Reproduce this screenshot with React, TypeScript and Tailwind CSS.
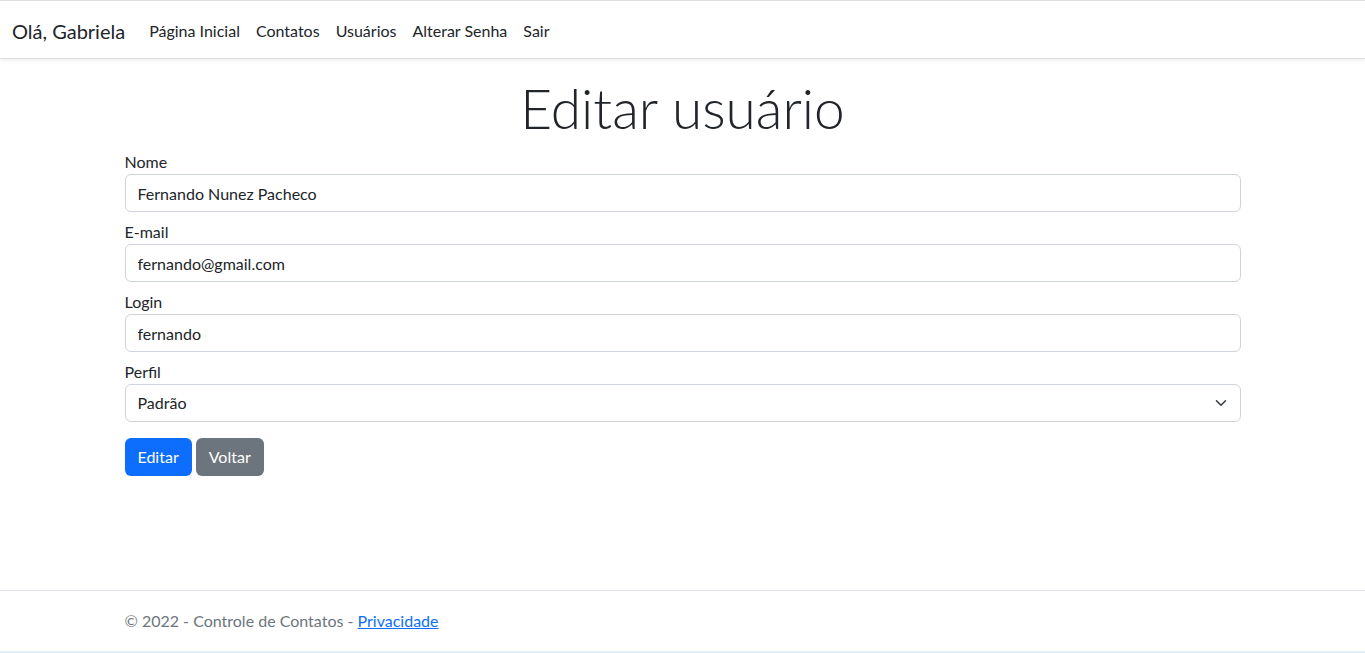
import { useState } from "react";

const font = { fontFamily: '"Segoe UI", Lato, "Noto Sans", "Liberation Sans", sans-serif' };

const navLinks = ["Página Inicial", "Contatos", "Usuários", "Alterar Senha", "Sair"];

function Field({
  label,
  value,
  onChange,
}: {
  label: string;
  value: string;
  onChange: (v: string) => void;
}) {
  return (
    <div className="mb-2">
      <label className="block text-[16px] leading-6 text-[#212529]">{label}</label>
      <input
        className="block w-full h-[38px] px-3 py-[6px] text-[16px] leading-6 text-[#212529] bg-white border border-[#ced4da] rounded-[6px] outline-none"
        value={value}
        onChange={(e) => onChange(e.target.value)}
      />
    </div>
  );
}

export default function App() {
  const [nome, setNome] = useState("Fernando Nunez Pacheco");
  const [email, setEmail] = useState("fernando@gmail.com");
  const [login, setLogin] = useState("fernando");
  const [perfil, setPerfil] = useState("Padrão");

  return (
    <div className="flex flex-col h-[653px] bg-white text-[#212529]" style={font}>
      <nav className="h-[59px] border-t border-b border-[#dedede] bg-white shadow-[0_2px_4px_rgba(0,0,0,0.06)] flex items-center px-3 pt-[2px]">
        <span className="text-[20px] leading-[30px] mr-4 text-[#212529]">Olá, Gabriela</span>
        <ul className="flex">
          {navLinks.map((l) => (
            <li key={l}>
              <a href="#" className="block px-2 py-2 text-[16px] leading-6 text-[#212529]">
                {l}
              </a>
            </li>
          ))}
        </ul>
      </nav>

      <main className="w-[1140px] mx-auto px-3 mt-4">
        <h1 className="text-center text-[55px] leading-[67px] font-light mb-2">Editar usuário</h1>
        <form onSubmit={(e) => e.preventDefault()}>
          <Field label="Nome" value={nome} onChange={setNome} />
          <Field label="E-mail" value={email} onChange={setEmail} />
          <Field label="Login" value={login} onChange={setLogin} />
          <div className="mb-2">
            <label className="block text-[16px] leading-6">Perfil</label>
            <div className="relative">
              <select
                className="block w-full h-[38px] pl-3 pr-9 py-[6px] text-[16px] leading-6 text-[#212529] bg-white border border-[#ced4da] rounded-[6px] appearance-none outline-none"
                value={perfil}
                onChange={(e) => setPerfil(e.target.value)}
              >
                <option>Padrão</option>
                <option>Administrador</option>
              </select>
              <svg
                className="absolute right-3 top-[13px] pointer-events-none"
                width="16"
                height="12"
                viewBox="0 0 16 16"
              >
                <path d="m2 5 6 6 6-6" fill="none" stroke="#343a40" strokeWidth="2" strokeLinecap="round" strokeLinejoin="round" />
              </svg>
            </div>
          </div>
          <div className="flex gap-1 mt-4">
            <button className="h-[38px] px-[13px] text-[16px] leading-6 text-white bg-[#0d6efd] rounded-[6px]">Editar</button>
            <button type="button" className="h-[38px] px-[13px] text-[16px] leading-6 text-white bg-[#6c757d] rounded-[6px]">
              Voltar
            </button>
          </div>
        </form>
      </main>

      <footer className="mt-auto border-t border-[#dee2e6] leading-[60px] text-[#6c757d]">
        <div className="w-[1140px] mx-auto px-3 text-[16px]">
          © 2022 - Controle de Contatos -{" "}
          <a href="#" className="text-[#0d6efd] underline">
            Privacidade
          </a>
        </div>
      </footer>
      <div className="h-[2px] bg-[#e4ecf5]" />
    </div>
  );
}
